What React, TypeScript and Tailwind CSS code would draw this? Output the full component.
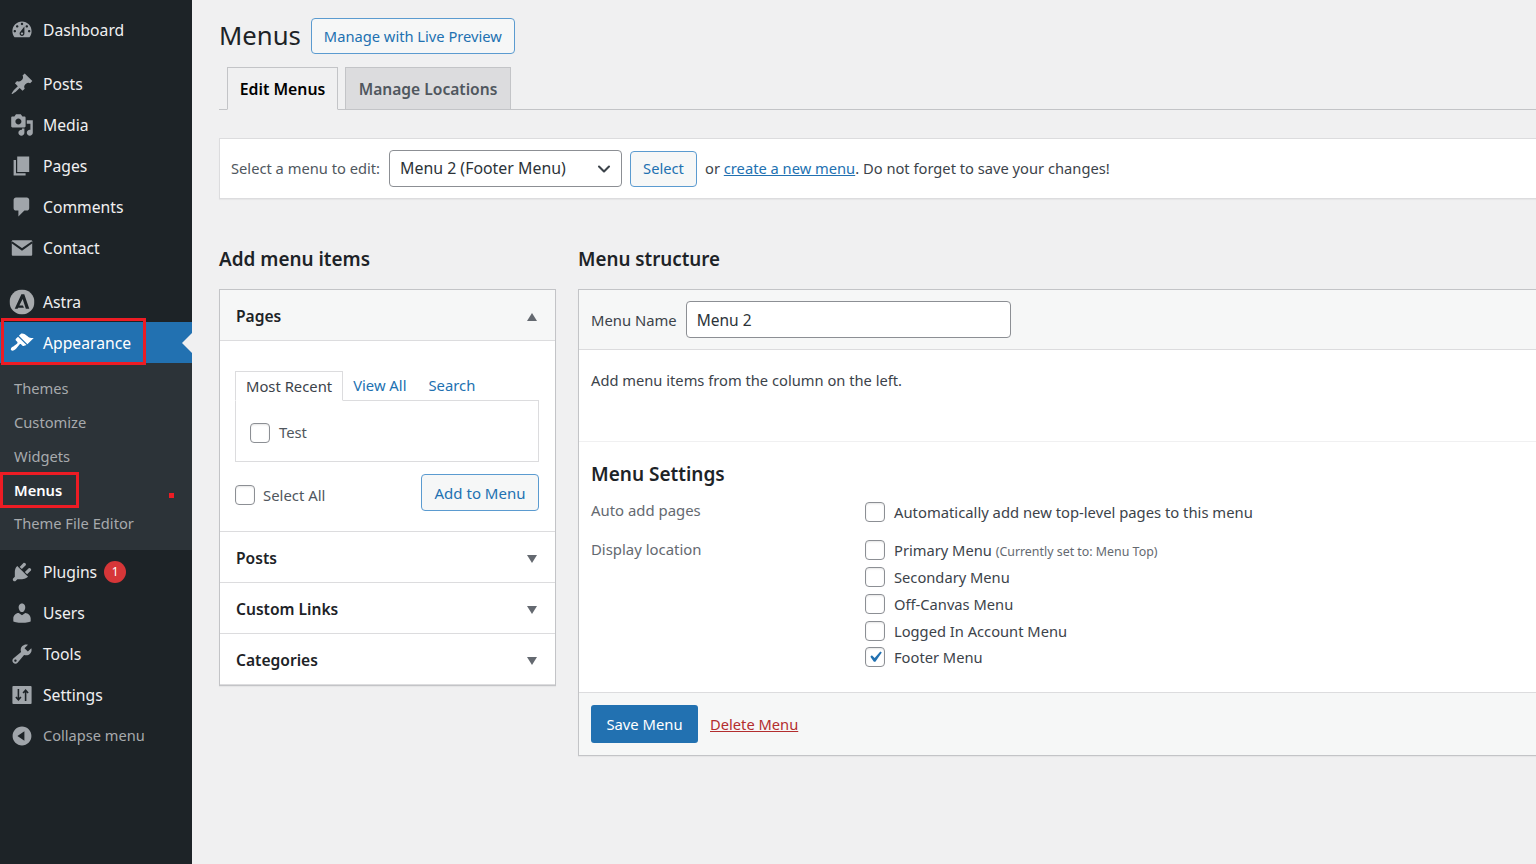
import { ChevronDown } from "lucide-react";

const font = "font-['Noto_Sans','Open_Sans',sans-serif]";

const paths: Record<string, string> = {
  dashboard:
    "M3.76 16h12.48c1.1-1.37 1.76-3.11 1.76-5 0-4.42-3.58-8-8-8s-8 3.58-8 8c0 1.89.66 3.63 1.76 5zM10 4c.55 0 1 .45 1 1s-.45 1-1 1-1-.45-1-1 .45-1 1-1zM6 6c.55 0 1 .45 1 1s-.45 1-1 1-1-.45-1-1 .45-1 1-1zm8 0c.55 0 1 .45 1 1s-.45 1-1 1-1-.45-1-1 .45-1 1-1zm-5.37 5.55L12 7v6c0 1.1-.9 2-2 2s-2-.9-2-2c0-.57.24-1.08.63-1.45zM4 10c.55 0 1 .45 1 1s-.45 1-1 1-1-.45-1-1 .45-1 1-1zm12 0c.55 0 1 .45 1 1s-.45 1-1 1-1-.45-1-1 .45-1 1-1zm-5 3c0-.55-.45-1-1-1s-1 .45-1 1 .45 1 1 1 1-.45 1-1z",
  posts:
    "M10.44 3.02l1.82-1.82 6.36 6.35-1.83 1.82c-1.05-.68-2.48-.57-3.41.36l-.75.75c-.92.93-1.04 2.35-.35 3.41l-1.83 1.82-2.41-2.41-2.8 2.79c-.42.42-3.38 2.71-3.8 2.29s1.86-3.39 2.28-3.81l2.79-2.79L4.1 9.36l1.83-1.82c1.05.69 2.48.57 3.4-.36l.75-.75c.93-.92 1.05-2.35.36-3.41z",
  media:
    "M13 11V4c0-.55-.45-1-1-1h-1.67L9 1H5L3.67 3H2c-.55 0-1 .45-1 1v7c0 .55.45 1 1 1h10c.55 0 1-.45 1-1zM7 4.5c1.38 0 2.5 1.12 2.5 2.5S8.38 9.5 7 9.5 4.5 8.38 4.5 7 5.62 4.5 7 4.5zM14 6h5v10.5c0 1.38-1.12 2.5-2.5 2.5S14 17.88 14 16.5s1.12-2.5 2.5-2.5c.17 0 .34.02.5.05V9h-3V6zm-4 8.05V13h2v3.5c0 1.38-1.12 2.5-2.5 2.5S7 17.88 7 16.5 8.12 14 9.5 14c.17 0 .34.02.5.05z",
  pages: "M6 15V2h10v13H6zm-1 1h8v2H3V5h2v11z",
  comments: "M5 2h9c1.1 0 2 .9 2 2v7c0 1.1-.9 2-2 2h-2l-5 5v-5H5c-1.1 0-2-.9-2-2V4c0-1.1.9-2 2-2z",
  appearance:
    "M14.48 11.06L7.41 3.99l1.5-1.5c.5-.56 2.3-.47 3.51.32 1.21.8 1.43 1.28 2.91 2.1 1.18.64 2.45 1.26 4.45.85zm-.71.71L6.7 4.7 4.93 6.47c-.39.39-.39 1.02 0 1.41l1.06 1.06c.39.39.39 1.03 0 1.42-.6.6-1.43 1.11-2.21 1.69-.35.26-.7.53-1.01.84C1.43 13.23 0 15.04 1.08 16.13c1.09 1.08 2.9-.35 4.34-1.71.31-.31.58-.66.84-1.01.58-.78 1.09-1.61 1.69-2.21.39-.39 1.03-.39 1.42 0l1.06 1.06c.39.39 1.02.39 1.41 0z",
  plugins:
    "M13.11 4.36L9.87 7.6 8 5.73l3.24-3.24c.35-.34 1.05-.2 1.56.32.52.51.66 1.21.31 1.55zm-8 1.77l.91-1.12 9.01 9.01-1.19.84c-.71.71-2.63 1.16-3.82 1.16H6.14L4.9 17.26c-.59.59-1.54.59-2.12 0-.59-.58-.59-1.53 0-2.12l1.24-1.24v-3.88c0-1.13.4-3.19 1.09-3.89zm7.26 3.97l3.24-3.24c.34-.35 1.04-.21 1.55.31.52.51.66 1.21.31 1.55l-3.24 3.25z",
  users:
    "M10 9.25c-2.27 0-2.73-3.44-2.73-3.44C7 4.02 7.82 2 9.97 2c2.16 0 2.98 2.02 2.71 3.81 0 0-.41 3.44-2.68 3.44zm0 2.57L12.72 10c2.39 0 4.52 2.33 4.52 4.53v2.49s-3.65 1.13-7.24 1.13c-3.65 0-7.24-1.13-7.24-1.13v-2.49c0-2.25 1.94-4.48 4.47-4.48z",
  tools:
    "M16.68 9.77c-1.34 1.34-3.3 1.67-4.95.99l-5.41 6.52c-.99.99-2.59.99-3.58 0s-.99-2.59 0-3.57l6.52-5.42c-.68-1.65-.35-3.61.99-4.95 1.28-1.28 3.12-1.62 4.72-1.06l-2.89 2.89 2.82 2.82 2.86-2.87c.53 1.58.18 3.39-1.08 4.65zM3.81 16.21c.4.39 1.04.39 1.43 0 .4-.4.4-1.04 0-1.43-.39-.4-1.03-.4-1.43 0-.39.39-.39 1.03 0 1.43z",
  collapse: "M10 2.16c4.33 0 7.84 3.51 7.84 7.84s-3.51 7.84-7.84 7.84S2.16 14.33 2.16 10 5.71 2.16 10 2.16zm2 11.72V6.12L6.18 9.97z",
};

function MenuIcon({ name }: { name: string }) {
  if (name === "contact") {
    return (
      <svg viewBox="0 0 20 20" className="h-6 w-6">
        <rect x="1.5" y="3.5" width="17" height="13" rx="0.8" fill="currentColor" />
        <path d="M1.5 5.2 10 11.2l8.5-6" fill="none" stroke="#1d2327" strokeWidth="1.7" />
      </svg>
    );
  }
  if (name === "astra") {
    return (
      <svg viewBox="0 0 24 24" className="h-6 w-6 scale-[1.04]">
        <circle cx="12" cy="12" r="12" fill="#a7aaad" />
        <path d="M11.4 4.5h2.8l4.8 14h-3.3L12.6 9l-3.2 6.4h3.5l1 2.1H8.3l-.5 1H5z" fill="#1d2327" />
      </svg>
    );
  }
  if (name === "settings") {
    return (
      <svg viewBox="0 0 20 20" className="h-6 w-6">
        <rect x="2" y="2.6" width="16" height="14.8" rx="0.8" fill="currentColor" />
        <path d="M7 5v9M4.9 11.6 7 14l2.1-2.4M13 15V6M10.9 8.4 13 6l2.1 2.4" fill="none" stroke="#1d2327" strokeWidth="1.3" />
      </svg>
    );
  }
  return (
    <svg viewBox="0 0 20 20" className="h-6 w-6" fill="currentColor">
      <path fillRule="evenodd" d={paths[name]} />
    </svg>
  );
}

function SideItem({ icon, label, children, dim }: { icon: string; label: string; children?: React.ReactNode; dim?: boolean }) {
  return (
    <div className={`flex h-[41px] items-center pl-[10px] text-[#f0f0f1] ${dim ? "text-[14.6px]" : "text-[15.7px]"}`}>
      <span className="mr-[9px] text-[#a0a5aa]">
        <MenuIcon name={icon} />
      </span>
      <span className={dim ? "text-[#a7aaad]" : "pt-[2px]"}>{label}</span>
      {children}
    </div>
  );
}

function SubItem({ label, current }: { label: string; current?: boolean }) {
  return (
    <div className={`flex h-[33.75px] items-center pl-[14px] text-[14.7px] ${current ? "font-semibold text-white" : "text-[#a7aaad]"}`}>
      {label}
    </div>
  );
}

function Sidebar() {
  return (
    <aside className="relative h-full w-[192px] shrink-0 bg-[#1d2327] pt-[9px]">
      <SideItem icon="dashboard" label="Dashboard" />
      <div className="h-[13px]" />
      <SideItem icon="posts" label="Posts" />
      <SideItem icon="media" label="Media" />
      <SideItem icon="pages" label="Pages" />
      <SideItem icon="comments" label="Comments" />
      <SideItem icon="contact" label="Contact" />
      <div className="h-[13px]" />
      <SideItem icon="astra" label="Astra" />
      <div className="relative bg-[#2271b1] text-white">
        <div className="flex h-[41px] items-center pl-[10px] text-[15.7px] text-white">
          <span className="mr-[9px]">
            <MenuIcon name="appearance" />
          </span>
          <span className="pt-[2px]">Appearance</span>
        </div>
        <span className="absolute right-0 top-1/2 h-0 w-0 -translate-y-1/2 border-y-[10px] border-r-[10px] border-y-transparent border-r-[#f0f0f1]" />
      </div>
      <div className="relative h-[186.5px] bg-[#2c3338] pt-[8.5px]">
        <SubItem label="Themes" />
        <SubItem label="Customize" />
        <SubItem label="Widgets" />
        <SubItem label="Menus" current />
        <SubItem label="Theme File Editor" />
        <span className="absolute left-[169px] top-[130px] h-[5px] w-[5px] bg-[#ed1c24]" />
        <span className="absolute left-0 top-[109px] h-[36px] w-[79px] border-[3.5px] border-[#ed1c24]" />
      </div>
      <div className="h-[2px]" />
      <SideItem icon="plugins" label="Plugins">
        <span className="ml-[7px] flex h-[22px] w-[22px] items-center justify-center rounded-full bg-[#d63638] text-[12px] text-white">1</span>
      </SideItem>
      <SideItem icon="users" label="Users" />
      <SideItem icon="tools" label="Tools" />
      <SideItem icon="settings" label="Settings" />
      <SideItem icon="collapse" label="Collapse menu" dim />
      <span className="absolute left-[1px] top-[318px] h-[47px] w-[145px] border-[3.5px] border-[#ed1c24]" />
    </aside>
  );
}

function Checkbox({ checked }: { checked?: boolean }) {
  return (
    <span className="flex h-[20px] w-[20px] shrink-0 items-center justify-center rounded-[4px] border border-[#8c8f94] bg-white shadow-[inset_0_1px_2px_rgba(0,0,0,0.1)]">
      {checked && (
        <svg viewBox="0 0 20 20" className="h-[22px] w-[22px] shrink-0">
          <path d="M14.83 4.89l1.34.94-5.81 8.38H9.02L5.78 9.67l1.34-1.25 2.57 2.4z" fill="#2271b1" />
        </svg>
      )}
    </span>
  );
}

function Accordion({ title, open }: { title: string; open?: boolean }) {
  return (
    <div className={`flex h-[51px] items-center justify-between border-b border-[#dcdcde] pl-[16px] pr-[18px] pt-[3px] text-[15.6px] font-semibold text-[#1d2327] ${open ? "bg-[#f6f7f7]" : "bg-white"}`}>
      {title}
      <span className={`h-0 w-0 border-x-[5px] border-x-transparent ${open ? "border-b-[8px] border-b-[#646970]" : "border-t-[8px] border-t-[#646970]"}`} />
    </div>
  );
}

function AddItems() {
  return (
    <div className="w-[337px] shrink-0">
      <h2 className="mb-[15px] flex h-[30px] items-center text-[18.9px] font-semibold text-[#1d2327]">Add menu items</h2>
      <div className="border border-[#c3c4c7] bg-white shadow-[0_1px_1px_rgba(0,0,0,0.04)]">
        <Accordion title="Pages" open />
        <div className="h-[191px] border-b border-[#dcdcde] pl-[15px] pr-[16px] pt-[29px]">
          <div className="flex h-[30px] items-end text-[14.8px]">
            <div className="relative z-10 -mb-px flex h-[30px] items-center border border-b-white border-[#dcdcde] px-[10px] text-[#3c434a]">Most Recent</div>
            <span className="ml-[10px] flex h-[29px] items-center text-[#2271b1]">View All</span>
            <span className="ml-[22px] flex h-[29px] items-center text-[#2271b1]">Search</span>
          </div>
          <div className="flex h-[62px] items-center gap-[9px] border border-[#dcdcde] pl-[14px] pt-[3px] text-[14.8px] text-[#50575e]">
            <Checkbox />
            Test
          </div>
          <div className="mt-[12px] flex items-start justify-between">
            <span className="mt-[10px] flex items-center gap-[8px] text-[14.9px] text-[#50575e]">
              <Checkbox />
              Select All
            </span>
            <span className="flex h-[37px] w-[118px] items-center justify-center rounded-[4px] border border-[#5b9bd0] bg-[#f6f7f7] pt-[1px] text-[15px] text-[#2271b1]">Add to Menu</span>
          </div>
        </div>
        <Accordion title="Posts" />
        <Accordion title="Custom Links" />
        <Accordion title="Categories" />
      </div>
    </div>
  );
}

const locations = [
  { label: "Secondary Menu" },
  { label: "Off-Canvas Menu" },
  { label: "Logged In Account Menu" },
  { label: "Footer Menu", checked: true },
];

function Structure() {
  return (
    <div className="min-w-0 flex-1">
      <h2 className="mb-[15px] flex h-[30px] items-center text-[18.8px] font-semibold text-[#1d2327]">Menu structure</h2>
      <div className="border border-r-0 border-[#c3c4c7] bg-white shadow-[0_1px_1px_rgba(0,0,0,0.04)]">
        <div className="flex h-[60px] items-center border-b border-[#dcdcde] bg-[#f6f7f7] pl-[12px] text-[14.8px] text-[#3c434a]">
          <span className="pt-[2px]">Menu Name</span>
          <span className="ml-[9px] flex h-[37px] w-[325px] items-center rounded-[4px] border border-[#8c8f94] bg-white pl-[10px] pt-[2px] text-[15.5px] text-[#2c3338]">Menu 2</span>
        </div>
        <div className="px-[12px]">
          <p className="flex h-[60px] items-center text-[14.7px] text-[#3c434a]">Add menu items from the column on the left.</p>
        </div>
        <div className="mt-[31px] border-t border-[#f0f0f1] px-[12px] pt-[16px]">
          <h3 className="flex h-[33px] items-center text-[19px] font-semibold text-[#1d2327]">Menu Settings</h3>
          <div className="mt-[9px] flex">
            <div className="h-[24px] w-[274px] text-[14.9px] leading-[20px] text-[#646970]">Auto add pages</div>
            <label className="flex h-[24px] items-center gap-[9px] text-[14.8px] text-[#3c434a]">
              <Checkbox />
              Automatically add new top-level pages to this menu
            </label>
          </div>
          <div className="mt-[13px] flex">
            <div className="w-[274px] text-[14.9px] leading-[24px] text-[#646970]">Display location</div>
            <div>
              <div className="flex h-[26.75px] items-center gap-[9px] text-[14.7px] text-[#3c434a]">
                <Checkbox />
                <span>
                  Primary Menu <span className="text-[12.4px] text-[#646970]">(Currently set to: Menu Top)</span>
                </span>
              </div>
              {locations.map((l) => (
                <div key={l.label} className="flex h-[26.75px] items-center gap-[9px] text-[14.7px] text-[#3c434a]">
                  <Checkbox checked={l.checked} />
                  {l.label}
                </div>
              ))}
            </div>
          </div>
        </div>
        <div className="mt-[21px] flex h-[63px] items-center gap-[12px] border-t border-[#dcdcde] bg-[#f6f7f7] pl-[12px]">
          <span className="flex h-[38px] w-[107px] items-center justify-center rounded-[3px] bg-[#2271b1] text-[14.8px] text-white">Save Menu</span>
          <span className="text-[14.7px] text-[#b32d2e] underline">Delete Menu</span>
        </div>
      </div>
    </div>
  );
}

export default function App() {
  return (
    <div className={`flex h-[864px] w-[1536px] overflow-hidden bg-[#f0f0f1] ${font}`}>
      <Sidebar />
      <main className="min-w-0 flex-1 pl-[27px]">
        <div className="flex h-[54px] items-end">
          <h1 className="h-[36px] text-[25.7px] leading-[36px] text-[#1d2327]">Menus</h1>
          <span className="ml-[10px] flex h-[36px] w-[204px] items-center justify-center rounded-[4px] border border-[#5b9bd0] bg-[#f6f7f7] text-[14.7px] text-[#2271b1]">Manage with Live Preview</span>
        </div>
        <div className="mt-[13px] flex h-[43px] items-end border-b border-[#c3c4c7] pl-[8px]">
          <div className="-mb-px flex h-[43px] w-[111px] items-center justify-center border border-b-[#f0f0f1] border-[#c3c4c7] bg-[#f0f0f1] pt-[3px] text-[15.8px] font-semibold text-[#000]">Edit Menus</div>
          <div className="ml-[7px] flex h-[42px] w-[166px] items-center justify-center border border-b-0 border-[#c3c4c7] bg-[#dcdcde] pt-[3px] text-[15.6px] font-semibold text-[#50575e]">Manage Locations</div>
        </div>
        <div className="mt-[28px] flex h-[61px] items-center border border-r-0 border-[#dcdcde] bg-white pl-[11px] text-[14.7px] text-[#3c434a] shadow-[0_1px_1px_rgba(0,0,0,0.04)]">
          <span className="text-[#50575e]">Select a menu to edit:</span>
          <span className="ml-[9px] flex h-[37px] w-[233px] items-center justify-between rounded-[4px] border border-[#8c8f94] bg-white pl-[10px] pr-[7px] pt-[1px] text-[15.9px] text-[#2c3338]">
            Menu 2 (Footer Menu)
            <ChevronDown size={20} strokeWidth={2.5} className="text-[#3c434a]" />
          </span>
          <span className="ml-[8px] flex h-[36px] w-[67px] items-center justify-center rounded-[4px] border border-[#5b9bd0] bg-[#f6f7f7] text-[#2271b1]">Select</span>
          <span className="ml-[8px]">
            or <span className="text-[#2271b1] underline">create a new menu</span>. Do not forget to save your changes!
          </span>
        </div>
        <div className="mt-[45px] flex gap-[22px]">
          <AddItems />
          <Structure />
        </div>
      </main>
    </div>
  );
}
